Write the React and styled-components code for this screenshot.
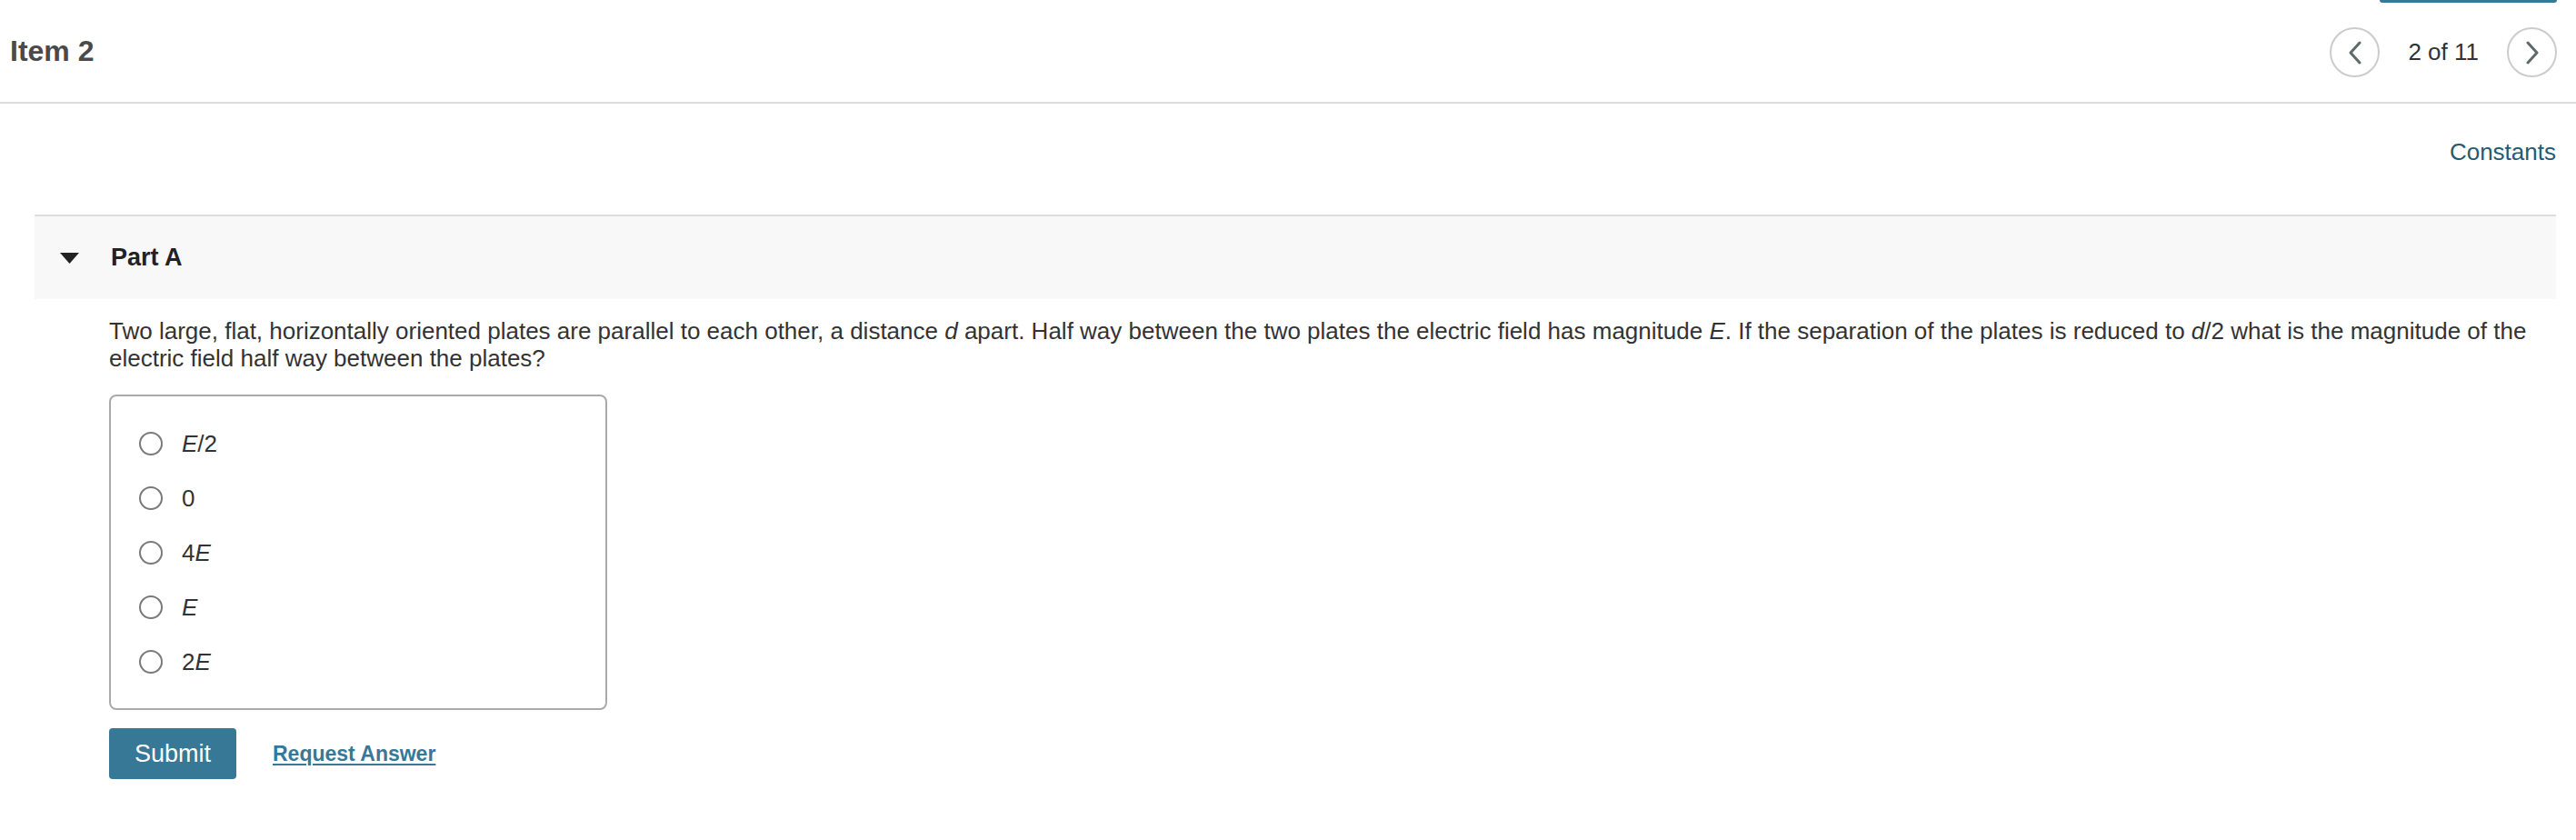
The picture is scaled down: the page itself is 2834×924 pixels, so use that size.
import React from "react";
import styled, { createGlobalStyle } from "styled-components";

const App = () => {
   const options = [
      { id: "a", label: <><Var>E</Var>/2</> },
      { id: "b", label: "0" },
      { id: "c", label: <>4<Var>E</Var></> },
      { id: "d", label: <Var>E</Var> },
      { id: "e", label: <>2<Var>E</Var></> },
   ];

   return (
      <>
         <GlobalStyle />
         <Header>
            <TopStrip>
               <StripTab />
            </TopStrip>
            <HeaderRow>
               <ItemTitle>Item 2</ItemTitle>
               <Nav>
                  <CircleButton aria-label="Previous">
                     <svg width="16" height="26" viewBox="0 0 16 26">
                        <polyline points="13,2 3,13 13,24" fill="none" stroke="#5f6b6b" strokeWidth="3" strokeLinecap="round" strokeLinejoin="round" />
                     </svg>
                  </CircleButton>
                  <Counter>2 of 11</Counter>
                  <CircleButton aria-label="Next">
                     <svg width="16" height="26" viewBox="0 0 16 26">
                        <polyline points="3,2 13,13 3,24" fill="none" stroke="#5f6b6b" strokeWidth="3" strokeLinecap="round" strokeLinejoin="round" />
                     </svg>
                  </CircleButton>
               </Nav>
            </HeaderRow>
         </Header>
         <Main>
            <ConstantsRow>
               <ConstantsLink href="#">Constants</ConstantsLink>
            </ConstantsRow>
            <Section>
               <PartHeader>
                  <svg width="21" height="12" viewBox="0 0 21 12">
                     <polygon points="0,0 21,0 10.5,12" fill="#222" />
                  </svg>
                  <PartTitle>Part A</PartTitle>
               </PartHeader>
               <Content>
                  <Question>
                     Two large, flat, horizontally oriented plates are parallel to each other, a distance <Var>d</Var> apart. Half way
                     between the two plates the electric field has magnitude <Var>E</Var>. If the separation of the plates is reduced
                     to <Var>d</Var>/2 what is the magnitude of the electric field half way between the plates?
                  </Question>
                  <Options>
                     {options.map((o) => (
                        <Option key={o.id}>
                           <Radio type="radio" name="partA" />
                           <OptionLabel>{o.label}</OptionLabel>
                        </Option>
                     ))}
                  </Options>
                  <Actions>
                     <SubmitBtn>Submit</SubmitBtn>
                     <RequestLink href="#">Request Answer</RequestLink>
                  </Actions>
               </Content>
            </Section>
         </Main>
      </>
   );
};

export default App;

const GlobalStyle = createGlobalStyle`
   body {
      margin: 0;
      background: #fff;
      color: #333;
      font-family: "Liberation Sans", Arial, Helvetica, sans-serif;
   }
`;

const Var = styled.i`
   font-style: italic;
`;

const Header = styled.header`
   border-bottom: 2px solid #ddd;
   padding: 0 21px 0 11px;
`;

const TopStrip = styled.div`
   display: flex;
   justify-content: flex-end;
   height: 3px;
`;

const StripTab = styled.div`
   width: 195px;
   height: 3px;
   background: #377897;
   border-radius: 0 0 4px 4px;
`;

const HeaderRow = styled.div`
   display: flex;
   align-items: center;
   justify-content: space-between;
   height: 109px;
`;

const ItemTitle = styled.h1`
   margin: 0 0 4px;
   font-size: 32px;
   line-height: 32px;
   font-weight: 700;
   color: #4a4a4a;
`;

const Nav = styled.div`
   display: flex;
   align-items: center;
   gap: 31px;
`;

const CircleButton = styled.button`
   width: 55px;
   height: 55px;
   box-sizing: border-box;
   border: 2px solid #ccc;
   border-radius: 50%;
   background: #fff;
   display: flex;
   align-items: center;
   justify-content: center;
   padding: 0;
   cursor: pointer;
`;

const Counter = styled.span`
   font-size: 26px;
   color: #333;
`;

const Main = styled.main`
   padding: 0 22px 0 38px;
`;

const ConstantsRow = styled.div`
   display: flex;
   justify-content: flex-end;
   margin-top: 38px;
   line-height: 30px;
`;

const ConstantsLink = styled.a`
   font-size: 26px;
   color: #245b73;
   text-decoration: none;
`;

const Section = styled.section`
   margin-top: 54px;
   border-top: 2px solid #ddd;
`;

const PartHeader = styled.div`
   height: 91px;
   background: #f8f8f8;
   display: flex;
   align-items: center;
   padding-left: 28px;
   gap: 35px;
`;

const PartTitle = styled.h2`
   margin: 0;
   font-size: 27px;
   line-height: 1;
   font-weight: 700;
   color: #222;
`;

const Content = styled.div`
   padding: 20px 20px 0 82px;
`;

const Question = styled.p`
   margin: 0;
   font-size: 26px;
   line-height: 30px;
   color: #333;
`;

const Options = styled.div`
   margin-top: 25px;
   width: 548px;
   box-sizing: border-box;
   border: 2px solid #aaa;
   border-radius: 8px;
   padding: 22px 0 21px 31px;
`;

const Option = styled.label`
   display: flex;
   align-items: center;
   height: 60px;
   gap: 21px;
   cursor: pointer;
`;

const Radio = styled.input`
   appearance: none;
   margin: 0;
   width: 26px;
   height: 26px;
   box-sizing: border-box;
   border: 2px solid #7a7a7a;
   border-radius: 50%;
   background: #fff;
`;

const OptionLabel = styled.span`
   font-size: 26px;
   color: #333;
`;

const Actions = styled.div`
   display: flex;
   align-items: center;
   gap: 40px;
   margin-top: 20px;
`;

const SubmitBtn = styled.button`
   width: 140px;
   height: 56px;
   background: #377897;
   color: #fff;
   border: none;
   border-radius: 4px;
   font-family: inherit;
   font-size: 27px;
   cursor: pointer;
`;

const RequestLink = styled.a`
   font-size: 23px;
   font-weight: 700;
   color: #35789a;
   text-decoration: underline;
   text-decoration-thickness: 2px;
   text-underline-offset: 3px;
`;
